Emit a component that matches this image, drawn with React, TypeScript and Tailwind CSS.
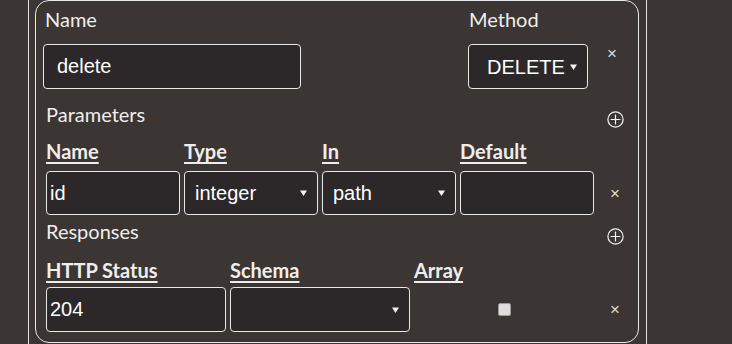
import React from 'react'

const label = "font-['Lato',sans-serif] text-[20px] leading-[24px] text-[#f0eeec]"
const head = "font-['Lato',sans-serif] font-bold text-[20px] leading-[24px] text-[#f0eeec] underline underline-offset-[3px] decoration-[1.5px]"
const field =
  "block w-full rounded-[4px] border border-[#e8e8e8] bg-[#2c2728] text-white font-['Liberation_Sans',Arial,sans-serif] text-[20px] outline-none"

function Arrow() {
  return (
    <svg className="pointer-events-none ml-auto shrink-0" width="7" height="6" viewBox="0 0 7 6">
      <polygon points="0,0.5 7,0.5 3.5,6" fill="#f2f2f2" />
    </svg>
  )
}

function Select({ value, className }: { value: string; className?: string }) {
  return (
    <div role="combobox" className={`${field} flex items-center pr-[10px] ${className ?? ''}`}>
      <span>{value}</span>
      <Arrow />
    </div>
  )
}

function Close({ className }: { className?: string }) {
  return (
    <button
      className={`font-['Liberation_Sans',Arial,sans-serif] text-[17px] leading-none text-[#dcdcdc] ${className ?? ''}`}
    >
      ×
    </button>
  )
}

function Plus() {
  return (
    <svg width="17" height="17" viewBox="0 0 17 17">
      <circle cx="8.5" cy="8.5" r="7.6" fill="none" stroke="#f4f4f4" strokeWidth="1.2" />
      <path d="M8.5 3.6v9.8M3.6 8.5h9.8" stroke="#f4f4f4" strokeWidth="1.2" />
    </svg>
  )
}

export default function App() {
  return (
    <div className="h-[344px] w-[732px] overflow-hidden bg-[#3b3633]">
      <div className="ml-[28px] h-full w-[619px] border-x border-[#e4e4e4] pl-[6px]">
        <div className="h-[343px] w-[604px] rounded-[14px] border border-[#e8e8e8] pt-[6px] pl-[10px]">
          {/* method header */}
          <div className="-ml-[3px] flex items-start">
            <div className="w-[258px]">
              <div className={`${label} pl-[2px]`}>Name</div>
              <input defaultValue="delete" className={`${field} mt-[13px] h-[45px] pl-[13px]`} />
            </div>
            <div className="ml-[167px] w-[120px]">
              <div className={`${label} pl-[1px]`}>Method</div>
              <div className="mt-[13px]">
                <Select value="DELETE" className="h-[45px] pl-[18px]" />
              </div>
            </div>
            <Close className="mt-[38px] ml-[19px]" />
          </div>

          {/* parameters */}
          <div className="mt-[13px] flex items-start">
            <div className={`${label} w-[548px]`}>Parameters</div>
            <div className="flex h-[24px] w-[42px] justify-center pt-[9px]">
              <Plus />
            </div>
          </div>
          <div className="mt-[13px] grid w-[548px] grid-cols-4 gap-x-[4px]">
            <div className={head}>Name</div>
            <div className={head}>Type</div>
            <div className={head}>In</div>
            <div className={head}>Default</div>
          </div>
          <div className="mt-[8px] flex items-center">
            <div className="grid w-[548px] grid-cols-4 gap-x-[4px]">
              <input defaultValue="id" className={`${field} h-[44px] pl-[3px]`} />
              <Select value="integer" className="h-[44px] pl-[10px]" />
              <Select value="path" className="h-[44px] pl-[10px]" />
              <input defaultValue="" className={`${field} h-[44px] pl-[3px]`} />
            </div>
            <div className="flex w-[42px] justify-center">
              <Close />
            </div>
          </div>

          {/* responses */}
          <div className="mt-[4px] flex items-start">
            <div className={`${label} w-[548px]`}>Responses</div>
            <div className="flex h-[24px] w-[42px] justify-center pt-[9px]">
              <Plus />
            </div>
          </div>
          <div className="mt-[15px] grid w-[548px] grid-cols-3 gap-x-[4px]">
            <div className={head}>HTTP Status</div>
            <div className={head}>Schema</div>
            <div className={head}>Array</div>
          </div>
          <div className="mt-[5px] flex items-center">
            <div className="grid w-[548px] grid-cols-3 gap-x-[4px]">
              <input defaultValue="204" className={`${field} h-[45px] pl-[3px]`} />
              <Select value="" className="h-[45px] pl-[10px]" />
              <div className="flex items-center justify-center">
                <span className="block h-[13px] w-[13px] rounded-[2px] border border-[#9a9a9a] bg-[#dedede]" />
              </div>
            </div>
            <div className="flex w-[42px] justify-center">
              <Close />
            </div>
          </div>
        </div>
      </div>
    </div>
  )
}
